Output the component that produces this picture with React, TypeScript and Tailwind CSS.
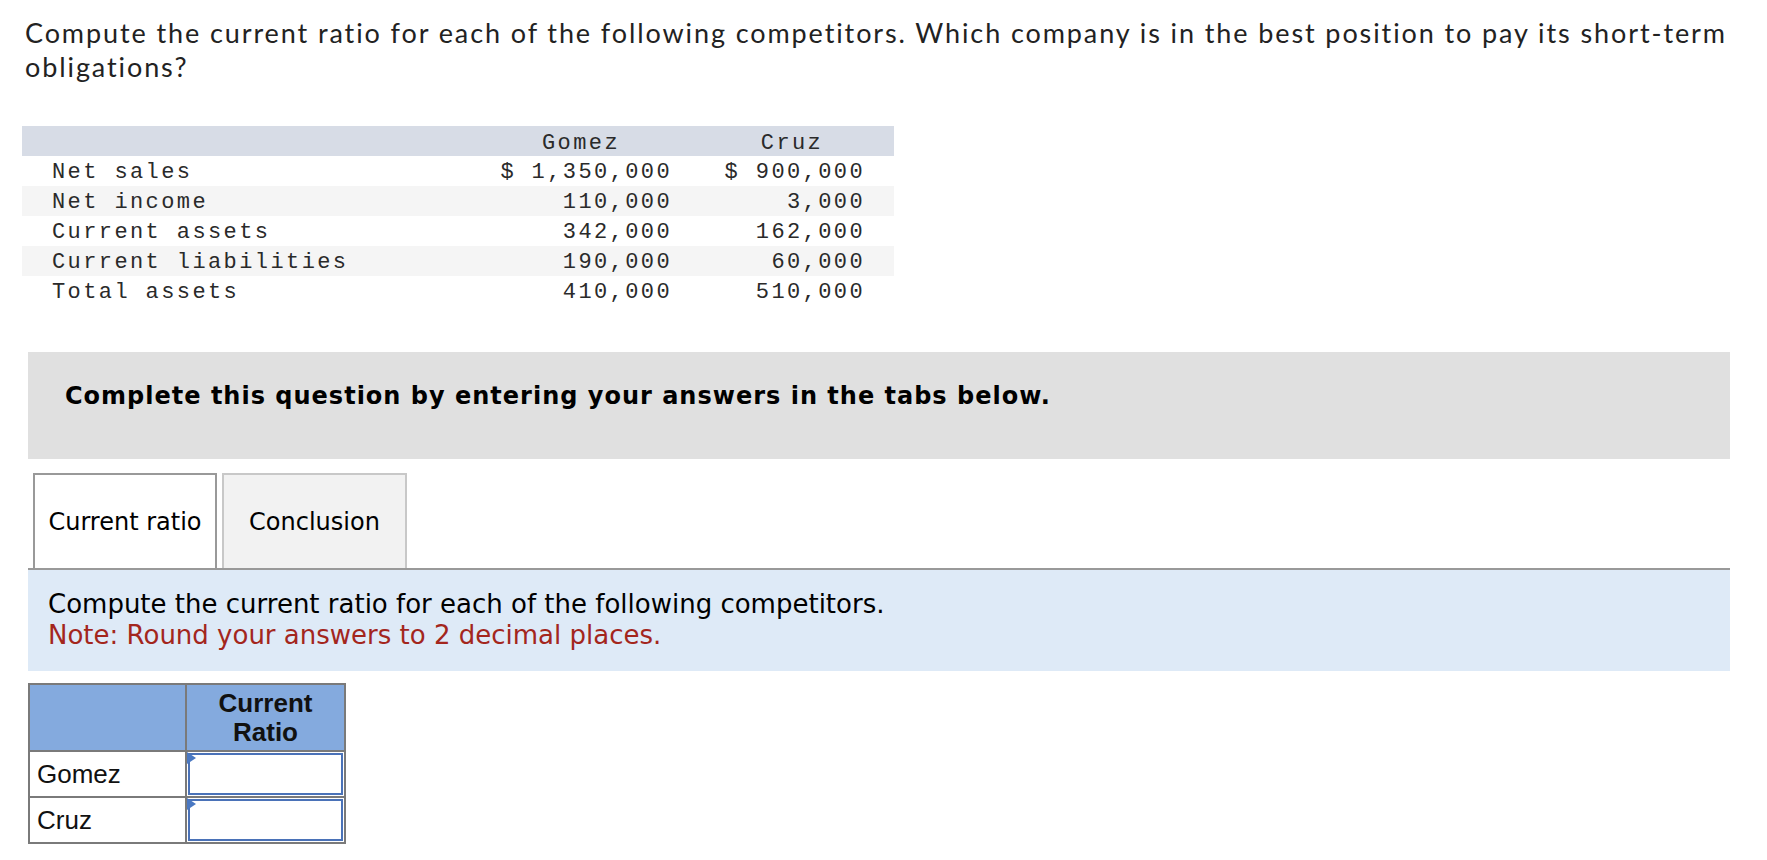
import React from "react";

const rows = [
  { label: "Net sales", g: "$ 1,350,000", c: "$ 900,000", shade: false },
  { label: "Net income", g: "110,000", c: "3,000", shade: true },
  { label: "Current assets", g: "342,000", c: "162,000", shade: false },
  { label: "Current liabilities", g: "190,000", c: "60,000", shade: true },
  { label: "Total assets", g: "410,000", c: "510,000", shade: false },
];

function Triangle() {
  return (
    <svg className="absolute left-0 top-0" width="9" height="12" viewBox="0 0 9 12">
      <polygon points="0,0 9,6 0,12" fill="#4a78c2" />
    </svg>
  );
}

export default function App() {
  return (
    <div className="min-h-[860px] w-full bg-white pt-[16px] pl-[25px] pr-[37px]">
      <p className="whitespace-nowrap font-['Lato',sans-serif] text-[27px] leading-[34px] tracking-[1.9px] text-[#222]">
        Compute the current ratio for each of the following competitors. Which company is in the best position to pay its short-term
        <br />
        obligations?
      </p>

      {/* data table */}
      <div className="mt-[42px] ml-[-3px] w-[872px] font-['Liberation_Mono',monospace] text-[22px] tracking-[2.4px] text-[#2a2a2a]">
        <div className="grid h-[30px] grid-cols-[450px_218px_204px] bg-[#d7dce6] pt-[3px] leading-[30px]">
          <div />
          <div className="text-center">Gomez</div>
          <div className="text-center">Cruz</div>
        </div>
        {rows.map((r) => (
          <div
            key={r.label}
            className={`grid h-[30px] grid-cols-[450px_218px_204px] pt-[3px] leading-[27px] ${r.shade ? "bg-[#f5f5f5]" : "bg-white"}`}
          >
            <div className="pl-[30px] whitespace-pre">{r.label}</div>
            <div className="pr-[18px] text-right whitespace-pre">{r.g}</div>
            <div className="pr-[29px] text-right whitespace-pre">{r.c}</div>
          </div>
        ))}
      </div>

      {/* instruction box */}
      <div className="mt-[46px] ml-[3px] h-[107px] bg-[#e0e0e0] pl-[37px] pt-[29px]">
        <p className="font-['DejaVu_Sans',sans-serif] text-[24px] font-bold leading-[30px] tracking-[1px] text-black">
          Complete this question by entering your answers in the tabs below.
        </p>
      </div>

      {/* tabs */}
      <div className="mt-[14px] ml-[3px] flex h-[97px] items-end gap-[5px] border-b-2 border-[#999] pl-[5px]">
        <div className="flex h-[95px] w-[184px] items-center justify-center border-2 border-b-0 border-[#999] bg-white font-['DejaVu_Sans',sans-serif] text-[24px] text-black">
          Current ratio
        </div>
        <div className="flex h-[95px] w-[185px] items-center justify-center border-2 border-b-0 border-[#c8c8c8] bg-[#f2f2f2] font-['DejaVu_Sans',sans-serif] text-[24px] text-black">
          Conclusion
        </div>
      </div>

      {/* blue instruction */}
      <div className="ml-[3px] h-[101px] bg-[#deeaf7] pl-[20px] pt-[19px] font-['DejaVu_Sans',sans-serif] text-[26px] leading-[31px]">
        <p className="text-black">Compute the current ratio for each of the following competitors.</p>
        <p className="text-[#a3261d]">Note: Round your answers to 2 decimal places.</p>
      </div>

      {/* answer table */}
      <div className="mt-[12px] ml-[3px] w-[318px] border-2 border-[#7a7a7a] font-['Liberation_Sans',Arial,sans-serif] text-[26px] text-[#111]">
        <div className="grid h-[67px] grid-cols-[157px_1fr] border-b-2 border-[#7a7a7a] bg-[#84aade]">
          <div className="border-r-2 border-[#7a7a7a]" />
          <div className="flex flex-col items-center justify-center font-bold leading-[29px] text-[#111]">
            <span>Current</span>
            <span>Ratio</span>
          </div>
        </div>
        <div className="grid h-[46px] grid-cols-[157px_1fr] border-b-2 border-[#7a7a7a]">
          <div className="flex items-center border-r-2 border-[#7a7a7a] pl-[7px]">Gomez</div>
          <div className="relative p-[1px]">
            <div className="h-full w-full border-2 border-[#4a72b8] bg-white" />
            <Triangle />
          </div>
        </div>
        <div className="grid h-[44px] grid-cols-[157px_1fr]">
          <div className="flex items-center border-r-2 border-[#7a7a7a] pl-[7px]">Cruz</div>
          <div className="relative p-[1px]">
            <div className="h-full w-full border-2 border-[#4a72b8] bg-white" />
            <Triangle />
          </div>
        </div>
      </div>
    </div>
  );
}
